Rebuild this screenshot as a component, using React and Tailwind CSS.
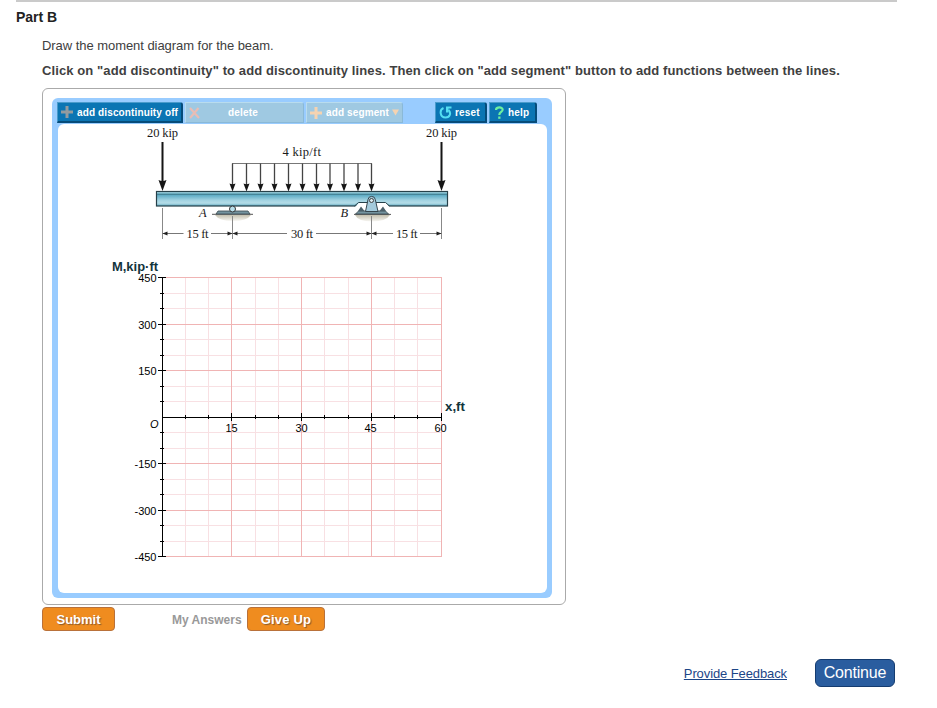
import React from 'react';

const xTicks = [0, 5, 10, 15, 20, 25, 30, 35, 40, 45, 50, 55, 60];
const yTicks = [450, 400, 350, 300, 250, 200, 150, 100, 50, 0, -50, -100, -150, -200, -250, -300, -350, -400, -450];

// beam position (ft) and moment (kip-ft) to drawing units
const toX = (ft) => Math.floor(162 + ft * 4.65) + 0.5;
const toY = (m) => Math.floor(417 - m * 0.31) + 0.5;

const distributedLoad = [232.5, 246.5, 260.5, 274.5, 288.5, 302.5, 316.5, 330, 344, 358, 371.5];

const Label = ({ x, y, width, children, italic }) => (
    <text
        x={x}
        y={y}
        textLength={width}
        className={`font-['Liberation_Serif',serif] text-[12.5px] fill-[#1a1a1a] ${italic ? 'italic' : ''}`}
    >
        {children}
    </text>
);

const PointLoad = ({ x }) => (
    <g fill="#151515">
        <rect x={x - 1} y="142" width="2" height="40" />
        <path d={`M${x - 4} 180 Q${x} 182 ${x + 4} 180 L${x} 191 Z`} />
    </g>
);

const Dimension = ({ from, to, gapStart, gapEnd }) => (
    <g stroke="#777" fill="#222">
        <path d={`M${from} 233.5H${gapStart}M${gapEnd} 233.5H${to}`} />
        <path stroke="none" d={`M${from} 233.5l5 -2v4zM${to} 233.5l-5 -2v4z`} />
    </g>
);

const Beam = () => (
    <g>
        <defs>
            <linearGradient id="beam" x1="0" y1="0" x2="0" y2="1">
                <stop offset="0" stopColor="#2f87a6" />
                <stop offset="0.15" stopColor="#4aa0bc" />
                <stop offset="0.6" stopColor="#a2d3e2" />
                <stop offset="0.8" stopColor="#b5dde8" />
                <stop offset="1" stopColor="#5fa9c0" />
            </linearGradient>
            <linearGradient id="ground" x1="0" y1="0" x2="0" y2="1">
                <stop offset="0" stopColor="#c4c0ae" />
                <stop offset="1" stopColor="#f8f7f3" />
            </linearGradient>
        </defs>

        <Label x={147} y={137} width={31}>20 kip</Label>
        <Label x={426} y={137} width={31}>20 kip</Label>
        <Label x={282.5} y={156} width={38.5}>4 kip/ft</Label>
        <PointLoad x={162.5} />
        <PointLoad x={441.5} />

        {/* distributed load */}
        <path d="M232 163.5H372" stroke="#777" />
        {distributedLoad.map((x) => (
            <g key={x}>
                <path d={`M${x} 163.5V186`} stroke="#444" strokeWidth="1.3" />
                <path d={`M${x - 3} 183.5Q${x} 185 ${x + 3} 183.5L${x} 191.5z`} fill="#151515" />
            </g>
        ))}

        {/* beam */}
        <rect x="156.5" y="191.5" width="291" height="14.5" fill="url(#beam)" stroke="#27414a" strokeWidth="1.2" />
        <path d="M157 192.9H447" stroke="#c3e2e8" />
        <path d="M157 194.3H447" stroke="#3d7182" strokeWidth="0.8" />

        {/* roller support */}
        <path d="M215 215h36q-4 6 -18 6t-18 -6z" fill="url(#ground)" />
        <path d="M212 214.3H253" stroke="#555" />
        <path d="M216 214l2 -3h30l2 3z" fill="#74939f" stroke="#39474d" strokeWidth="0.8" />
        <circle cx="232.5" cy="209" r="3" fill="#b8dfeb" stroke="#333" />

        {/* pin support */}
        <path d="M354.5 207.5l5 -5h26l4.5 5z" fill="#fff" />
        <path d="M354.5 206l4 -3.5h27l4 3.5" fill="none" stroke="#27414a" />
        <path d="M355 215h35q-4 6.5 -18 6.5t-17 -6.5z" fill="url(#ground)" />
        <path d="M354 214.4H391" stroke="#555" />
        <path d="M355.5 214l3 -3h27l3 3z" fill="#74939f" stroke="#39474d" strokeWidth="0.8" />
        <path d="M358 211l3 -4.5 3.5 4.5zM379.5 211l3.5 -4.5 3 4.5z" fill="#4b5f69" />
        <path d="M365.5 211.5L368 199.5a3.7 3.7 0 0 1 7.3 0L378 211.5z" fill="#a4cbdc" stroke="#36464e" />
        <circle cx="371.5" cy="200.5" r="2" fill="#dcecf1" stroke="#444" strokeWidth="1" />

        <Label x={199} y={216.5} italic>A</Label>
        <Label x={340.5} y={216.5} italic>B</Label>

        {/* dimensions */}
        <path d="M162.5 208V239M232.5 216V239M371.5 216V239M441.5 208V239" stroke="#888" />
        <Dimension from={162.5} to={232.5} gapStart={183.5} gapEnd={211} />
        <Dimension from={232.5} to={371.5} gapStart={287} gapEnd={316} />
        <Dimension from={371.5} to={441.5} gapStart={393} gapEnd={420} />
        <Label x={186.5} y={237.5} width={22}>15 ft</Label>
        <Label x={291} y={237.5} width={22}>30 ft</Label>
        <Label x={396} y={237.5} width={21.5}>15 ft</Label>
    </g>
);

const MomentGraph = () => (
    <g className="font-['Liberation_Sans',sans-serif] text-[11px]">
        {/* minor lines first so the major ones stay on top */}
        {[false, true].map((major) => (
            <g key={String(major)} stroke={major ? '#f0b4b4' : '#f8e0e3'}>
                {xTicks.filter((t) => (t % 15 === 0) === major).map((t) => (
                    <path key={t} d={`M${toX(t)} 277V557`} />
                ))}
                {yTicks.filter((t) => (t % 150 === 0) === major).map((t) => (
                    <path key={t} d={`M162 ${toY(t)}H441`} />
                ))}
            </g>
        ))}

        {/* axes */}
        <g stroke="#000">
            <path d="M162.5 277V557M162 417.5H442" />
            {xTicks.slice(1).map((t) => (
                <path key={t} d={t % 15 === 0 ? `M${toX(t)} 413V421` : `M${toX(t)} 415V419`} />
            ))}
            {yTicks.filter((t) => t !== 0).map((t) => (
                <path key={t} d={t % 150 === 0 ? `M158 ${toY(t)}H166` : `M160 ${toY(t)}H164`} />
            ))}
        </g>

        {[450, 300, 150, -150, -300, -450].map((t) => (
            <text key={t} x="156.5" y={toY(t) + 4} textAnchor="end">{t}</text>
        ))}
        {[15, 30, 45, 60].map((t) => (
            <text key={t} x={toX(t) - (t > 30 ? 1 : 0)} y="432" textAnchor="middle">{t}</text>
        ))}
        <text x="150" y="428" className="italic">O</text>
        <text x="112" y="271" textLength="46" lengthAdjust="spacingAndGlyphs" className="text-[12.5px] font-bold fill-[#12343b]">M,kip·ft</text>
        <text x="445" y="411" textLength="20" lengthAdjust="spacingAndGlyphs" className="text-[12.5px] font-bold fill-[#12343b]">x,ft</text>
    </g>
);

const ToolButton = ({ children, className, disabled }) => (
    <button
        type="button"
        disabled={disabled}
        className={`flex h-[21px] shrink-0 items-center rounded-tr-[3px] border whitespace-nowrap text-[10px] font-bold text-white ${
            disabled
                ? 'border-t-[#b9dcee] border-l-[#b9dcee] border-r-[#8ab9d8] border-b-[#8ab9d8] bg-[#9fc9e2]'
                : 'border-t-[#4a9bcb] border-l-[#4a9bcb] border-r-2 border-b-2 border-r-[#064c7a] border-b-[#064c7a] bg-[#0b75b3]'
        } ${className}`}
    >
        {children}
    </button>
);

const PlusIcon = ({ color }) => (
    <svg width="12" height="12" viewBox="0 0 12 12" className="shrink-0">
        <path d="M6 0V12M0 6H12" stroke={color} strokeWidth="3" />
    </svg>
);

const Toolbar = () => (
    <div className="flex h-[26px] items-start pt-1">
        <ToolButton className="w-[126px] gap-[4px] pl-[3px]">
            <PlusIcon color="#929b9f" />
            <span className="tracking-[0.13px]">add discontinuity off</span>
        </ToolButton>
        <ToolButton disabled className="ml-[2px] w-[119px] pl-[3px]">
            <svg width="11" height="12" viewBox="0 0 11 12">
                <path d="M1 1L10 11M9.5 1L1 11" stroke="#e9bdb5" strokeWidth="2.2" />
            </svg>
            <span className="ml-[28px] tracking-[0.2px]">delete</span>
        </ToolButton>
        <ToolButton disabled className="ml-[2px] w-[97px] pl-[3px]">
            <PlusIcon color="#f5d3b1" />
            <span className="ml-[4px] tracking-[0.12px]">add segment</span>
            <svg width="7" height="7" viewBox="0 0 7 7" className="ml-[3px] shrink-0">
                <path d="M0 0.5H7L3.5 6.5Z" fill="#f5d3b1" />
            </svg>
        </ToolButton>
        <ToolButton className="ml-[32px] w-[52px] pl-[3px]">
            <svg width="13" height="13" viewBox="0 0 13 13" className="shrink-0">
                <path d="M4.5 2C0 4 1 11.5 6.5 11.5C11 11.5 12.5 7 9.5 4" fill="none" stroke="#55dff2" strokeWidth="2" />
                <path d="M7 0.5H12.5V2.5H9.5V6.5H7Z" fill="#55dff2" />
            </svg>
            <span className="ml-[3px] tracking-[0.15px]">reset</span>
        </ToolButton>
        <ToolButton className="ml-[2px] w-[48px] pl-[5px]">
            <svg width="9" height="13" viewBox="0 0 9 13" className="shrink-0">
                <path d="M1 4C1 0.5 8 0.5 7.6 4C7.4 6 4.3 6 4.3 9" fill="none" stroke="#6df0a0" strokeWidth="2.2" />
                <rect x="3.2" y="10.5" width="2.3" height="2.3" fill="#6df0a0" />
            </svg>
            <span className="ml-[4px] tracking-[0.15px]">help</span>
        </ToolButton>
    </div>
);

const OrangeButton = ({ children, className }) => (
    <button
        type="button"
        className={`h-6 rounded-[4px] border border-[#b9713a] bg-[#ef8c1f] pt-px text-[13px] font-bold text-white text-shadow-[1px_1px_1px_#8a5a2a] ${className}`}
    >
        {children}
    </button>
);

const App = () => {
    return (
        <div className="h-[708px] w-[937px] overflow-hidden bg-white font-['Liberation_Sans',Arial,sans-serif] text-[13px] text-[#404040]">
            <div className="ml-4 h-[2px] w-[881px] bg-[#cacaca]" />
            <h2 className="ml-4 mt-[7px] text-[14px] leading-4 font-bold text-[#222]">Part B</h2>

            <div className="ml-[42px]">
                <p className="mt-3 leading-[18px] tracking-[-0.05px]">Draw the moment diagram for the beam.</p>
                <p className="mt-[7px] leading-[18px] font-bold whitespace-nowrap tracking-[0.1px]">
                    Click on "add discontinuity" to add discontinuity lines. Then click on "add segment" button to add functions between the lines.
                </p>

                <div className="mt-2 h-[517px] w-[524px] rounded-[6px] border border-[#aaa] p-[9px]">
                    <div className="h-[500px] w-[500px] rounded-[6px] bg-[#99ccff] pl-[5px]">
                        <Toolbar />
                        <svg
                            width="489"
                            height="469"
                            viewBox="58 124 489 469"
                            className="ml-px rounded-[6px] bg-white"
                        >
                            <Beam />
                            <MomentGraph />
                        </svg>
                    </div>
                </div>

                <div className="mt-[2px] flex items-center">
                    <OrangeButton className="w-[73px]">Submit</OrangeButton>
                    <span className="ml-[57px] w-[75px] pt-px whitespace-nowrap text-[12px] font-bold text-[#999]">My Answers</span>
                    <OrangeButton className="w-[78px] tracking-[0.2px]">Give Up</OrangeButton>
                </div>
            </div>

            <div className="mt-7 mr-[42px] flex h-7 items-center justify-end gap-7">
                <a href="#" className="pt-[2px] tracking-[-0.1px] text-[#1c4587] underline">Provide Feedback</a>
                <button type="button" className="h-7 w-20 rounded-[6px] border border-[#153c70] bg-[#2a5d9f] text-base leading-[26px] tracking-[-0.2px] text-white">
                    Continue
                </button>
            </div>
        </div>
    );
};

export default App;
